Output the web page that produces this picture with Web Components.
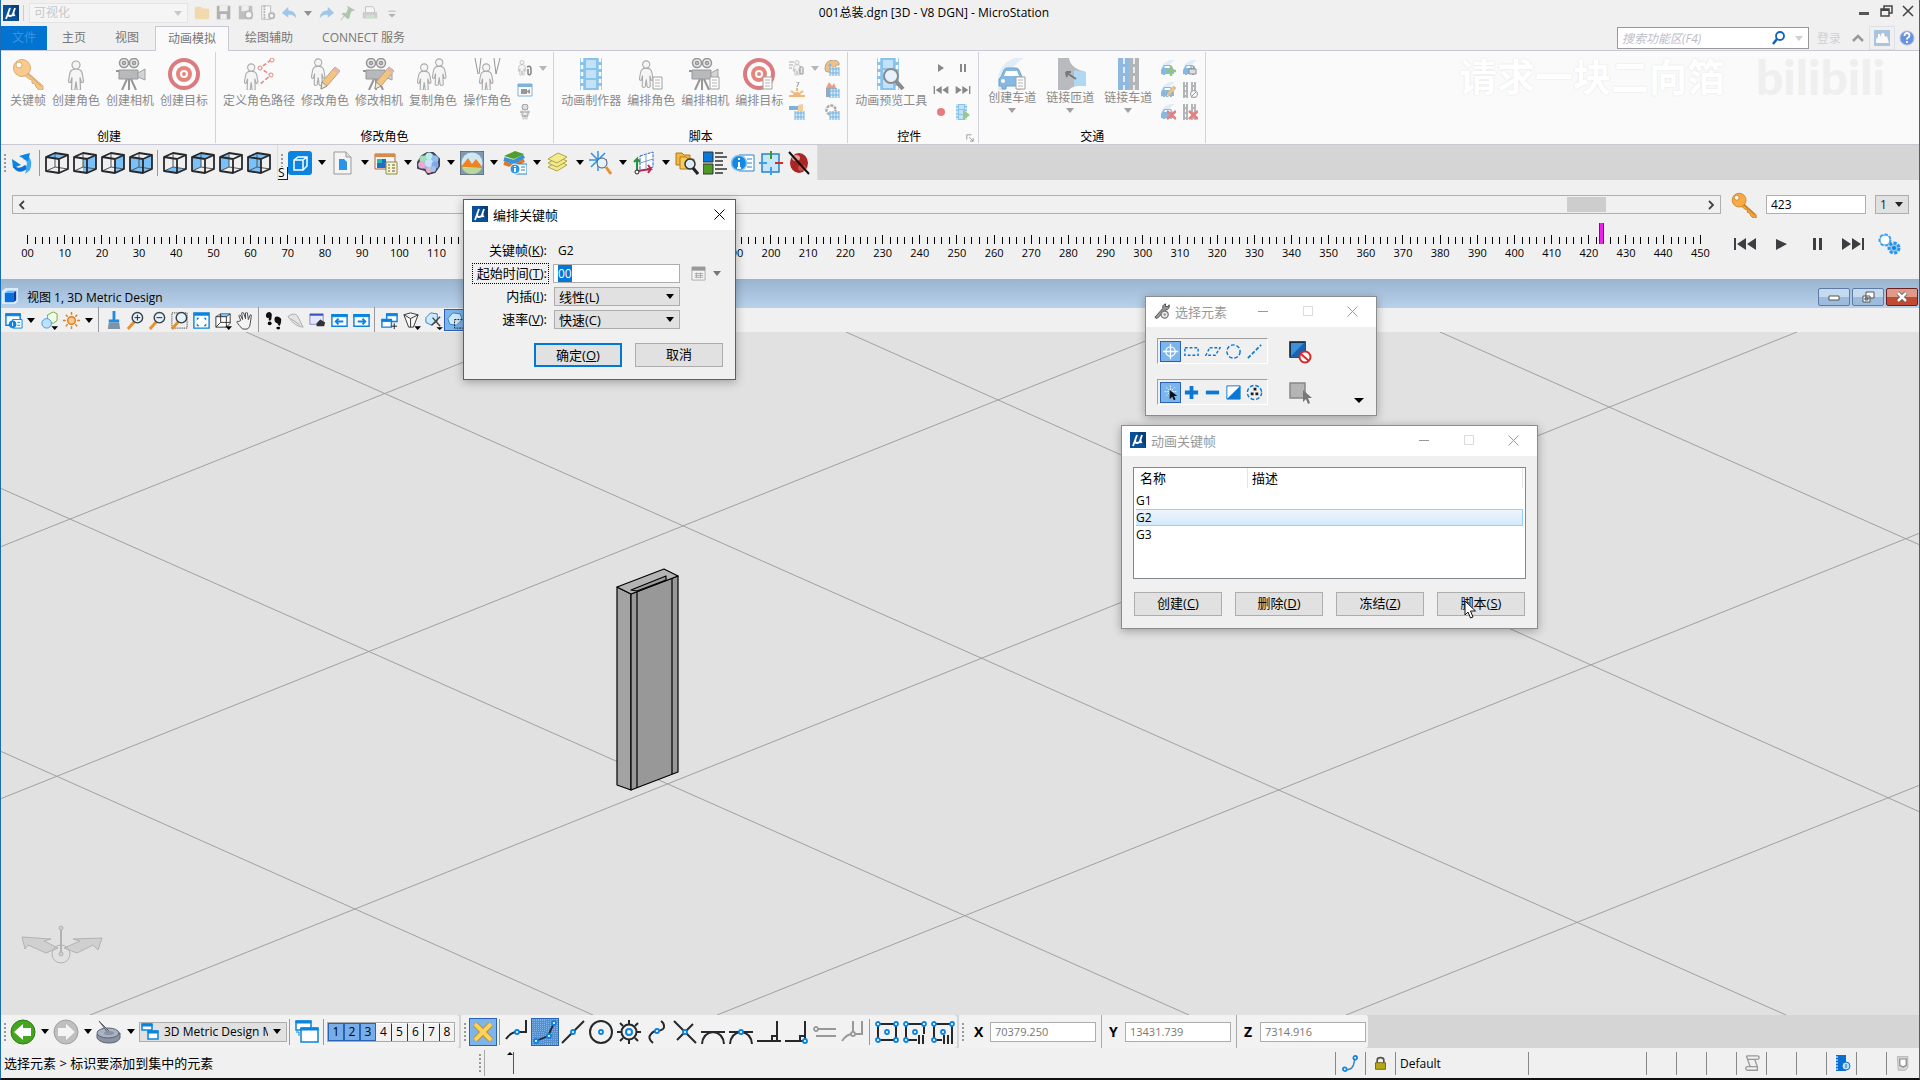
<!DOCTYPE html>
<html lang="zh-CN">
<head>
<meta charset="utf-8">
<title>001总装.dgn [3D - V8 DGN] - MicroStation</title>
<style>
body {
    margin: 0;
    background: #f0f0f0;
    font-family: "Open Sans", "Noto Sans CJK SC", sans-serif;
    font-size: 12px;
    color: #000;
}
</style>
</head>
<body>
<ms-app></ms-app>
<script>
// ---------- icons ----------
const person = (x, y, s = 1) => `<g transform="translate(${x} ${y}) scale(${s})" fill="#f2f2f2" stroke="#777" stroke-width="1.2"><path d="M4 10q4-2 8 0q2 1 2.500 5l1 6q0 2-2 1.500l-1.500-5l.5 12q-2.500 2-3.500 0l-1-8l-1 8q-1.500 2-3.500 0l.5-12l-1.500 5q-2 .5-2-1.500l1-6q.5-4 2.500-5z"/><circle cx="8" cy="5" r="4"/></g>`;
const pencil = (x, y, s = 1) => `<g transform="translate(${x} ${y}) scale(${s})"><path d="M15 0l5 4l-13 15l-6 3l1-7z" fill="#f0a030" stroke="#8a6a3a"/><path d="M15 0l5 4l-2 3l-5-4z" fill="#d78c7c"/><path d="M2 15l5 4l-6 3z" fill="#f2dcb8" stroke="#555"/></g>`;
const movie = `<g fill="#ddd" stroke="#555" stroke-width="1.500"><circle cx="8" cy="5" r="4.500"/><circle cx="18" cy="5" r="4.500"/><circle cx="8" cy="5" r="1.500"/><circle cx="18" cy="5" r="1.500"/></g><path d="M3 12h19v9h-19z" fill="#8c8f94" stroke="#555"/><path d="M22 15l7-4v11l-7-3z" fill="#bbb" stroke="#666"/><path d="M0 13h3M11 21l-5 11M15 21l5 11M13 21v11" stroke="#555" stroke-width="2"/>`;
const bull = `<circle cx="16" cy="16" r="14" fill="#fff" stroke="#c8282d" stroke-width="4"/><circle cx="16" cy="16" r="8" fill="#d8382c"/><circle cx="16" cy="16" r="4" fill="#fff"/><circle cx="16" cy="16" r="2" fill="#d8382c"/>`;
const sheet = (x, y) => `<g transform="translate(${x} ${y})"><path d="M0 0h9v12h-9z" fill="#fff" stroke="#666"/><path d="M2 3h5M2 6h5M2 9h5" stroke="#888"/></g>`;
const strip = (x, y, s = 1) => `<g transform="translate(${x} ${y}) scale(${s})"><path d="M0 0h22v32h-22z" fill="#3c9fe0"/><path d="M6 2h10v8h-10zM6 12h10v8h-10zM6 22h10v8h-10z" fill="#9fd3f5"/><path d="M2 0v32M20 0v32" stroke="#fff" stroke-width="2.500" stroke-dasharray="4 3"/></g>`;
const grid = (x, y) => `<g transform="translate(${x} ${y})"><path d="M0 0h9v9h-9z" fill="#bfe2fb"/><path d="M0 0v9M3 0v9M6 0v9M9 0v9M0 2h9M0 6h9" stroke="#1f83cf" fill="none"/></g>`;
const car = `<path d="M2 20q2-14 16-20h10q-16 8-18 32h-8z" fill="#cfe3f5"/><path d="M3 21l2-2l3-7q1-2 3-2h9q2 0 3 2l3 7l2 2v7h-3v3h-4v-3h-11v3h-4v-3h-3z" fill="#3a8fd2" stroke="#1f66a5"/><path d="M8 18l2-5h11l2 5z" fill="#fff"/><circle cx="7" cy="23" r="2" fill="#fff"/><circle cx="23" cy="23" r="2" fill="#fff"/>`;
const smallCar = `<path d="M1 10q1-8 9-10h5q-8 4-9 15h-5z" fill="#cfe3f5"/><path d="M1 10l3-5h7l3 5v4h-2v1h-2v-1h-5v1h-2v-1h-2z" fill="#3a8fd2"/><path d="M4 8l1-2h5l1 2z" fill="#fff"/>`;
const roads = `<path d="M1 0h5v16h-5zM9 0h5v16h-5z" fill="#85898e"/><path d="M3.500 0v16M11.500 0v16" stroke="#fff" stroke-dasharray="3 2"/>`;
const node = (x, y, c = "#0a84e0") => `<circle cx="${x}" cy="${y}" r="2" fill="#fff" stroke="${c}" stroke-width="1.800"/>`;
const cubeFaces = {
    top: "1,6 10,2 23,4 14,8", right: "14,8 23,4 23,18 14,22", front: "1,6 14,8 14,22 1,20",
    left: "1,6 10,2 10,16 1,20", back: "10,7 23,5 23,19 14,22 10,21", bottom: "1,20 10,16 23,18 14,22"
};
const cube = (...faces) => faces.map(f => `<polygon points="${cubeFaces[f]}" fill="#79c1fa"/>`).join("") +
    `<path d="M10 2v14l-9 4M10 16l13 2" fill="none" stroke="#555"/><path d="M1 6l9-4l13 2v14l-9 4l-13-2zM1 6l13 2l9-4M14 8v14" fill="none" stroke="#26282c" stroke-width="1.800" stroke-linejoin="round"/>`;
const lens = (extra = "") => `<path d="M9 11l-7 8" stroke="#e8912a" stroke-width="3"/><circle cx="12" cy="7" r="5.500" fill="#e3f2fc" stroke="#3c4148" stroke-width="1.500"/>${extra}`;
const pane = (x, y, w, h) => `<path d="M${x} ${y}h${w}v${h}h-${w}z" fill="#fff" stroke="#0a84e0" stroke-width="1.500"/><path d="M${x} ${y}h${w}v2h-${w}z" fill="#0a84e0" stroke="#0a84e0"/>`;
const fence = extra => `<path d="M3 4h18v16h-18z" fill="none" stroke="#26282c" stroke-width="2"/>${node(3, 4)}${node(21, 4)}${node(3, 20)}${extra ? "" : node(21, 20)}${node(12, 12)}${extra}`;
const sheets = (c, s) => [14, 10, 6].map(y => `<path d="M2 ${y}l9 4l10-6l-9-4z" fill="${c}" stroke="${s}"/>`).join("");

// name: [box size, markup]
const ICONS = {
    logo: [16, `<rect width="16" height="16" fill="#0b4f96"/><path d="M8 0h8v16z" fill="#0a3e78"/><path d="M7 3l-4 11M5.500 8q-1 3 1.500 3q2.500 0 4-3M12 3l-2 6q0 2 2 1" fill="none" stroke="#fff" stroke-width="1.800"/>`],
    key: [32, `<path d="M14 13l17 15v4h-4l-3-3l-1-3l-3-1v-3l-3-1l-6-5z" fill="#f5a33a" stroke="#c77a1a"/><path d="M14 14l15 14" stroke="#a8671a"/><circle cx="10" cy="10" r="8.500" fill="#f8ab45" stroke="#c77a1a"/><circle cx="7" cy="7" r="3" fill="#fff" stroke="#c77a1a"/>`],
    person: [32, person(8, 2)],
    movie: [32, `<g transform="translate(2 0)">${movie}</g>`],
    target: [32, bull],
    path: [32, person(1, 5, .9) + `<path d="M28 2l-11 8l11 7l-12 10" fill="none" stroke="#d8382c" stroke-width="1.500" stroke-dasharray="4 2"/><g fill="#fff" stroke="#d8382c"><circle cx="29" cy="2" r="2"/><circle cx="17" cy="10" r="2"/><circle cx="28" cy="17" r="2"/></g>`],
    personEdit: [32, person(2, 0, .9) + pencil(11, 9)],
    movieEdit: [32, movie + pencil(11, 9)],
    copy: [32, person(0, 5, .9) + person(15, 0, .9)],
    puppet: [32, person(8, 5, .9) + `<path d="M4 0l3 16M10 0l-2 16M23 0l2 16M29 0l-4 16" stroke="#555" fill="none"/>`],
    attach: [16, person(1, 0, .5) + `<path d="M10 7q4-2 4 2v4q-1 3-3 1v-5" fill="none" stroke="#333" stroke-width="1.500"/>`],
    camWin: [16, `<path d="M1 2h14v12h-14z" fill="#fff" stroke="#2a83c8"/><path d="M1 2h14v3h-14z" fill="#2a83c8"/><path d="M4 7h6v5h-6zM10 9l3-2v5l-3-2z" fill="#555"/>`],
    robot: [16, person(4, 0, .5) + `<path d="M3 8h10M5 12h6" stroke="#555"/><circle cx="8" cy="3" r="3" fill="#ccc" stroke="#666"/>`],
    film: [32, strip(5, 0)],
    personList: [32, person(4, 2, .9) + sheet(18, 19)],
    movieList: [32, movie + sheet(21, 19)],
    targetList: [32, bull + sheet(20, 19)],
    speed: [16, `<path d="M0 2h5M0 5h4M0 8h3" stroke="#777"/>` + person(4, 0, .5) + `<path d="M11 7q4-1 3 3v4h-3z" fill="#ddd" stroke="#555"/>`],
    sun: [16, `<path d="M4 14a4 4 0 0 1 8 0z" fill="#f08a24"/><path d="M8 6v3M2 9l3 2M14 9l-3 2M0 14h16" stroke="#f08a24" stroke-width="2"/><path d="M7 0h3l-2 5" fill="none" stroke="#555"/>`],
    torch: [16, `<path d="M0 2h9v4h-9z" fill="#2a83c8"/><path d="M9 1l5-1v8l-5-1z" fill="#f0b060"/>` + grid(6, 7)],
    palette: [16, `<path d="M1 9q0-9 9-9q6 1 5 5q-3-1-4 2q-2 6-7 5q-3 0-3-3z" fill="#e89a3c" stroke="#8a6a3a"/><circle cx="6" cy="5" r="1.500" fill="#3a8fd2"/>` + grid(6, 7)],
    fire: [16, `<path d="M2 6l3-6l3 4l2-3l2 5z" fill="#e8602c"/><path d="M2 6h11v9h-11z" fill="#56759a"/>` + grid(6, 7)],
    cog: [16, `<circle cx="7" cy="6" r="4.500" fill="#fff" stroke="#777" stroke-width="2.500" stroke-dasharray="3 1"/>` + grid(6, 7)],
    preview: [32, strip(2, 0) + `<path d="M20 22l8 9" stroke="#444" stroke-width="4"/><circle cx="16" cy="18" r="7" fill="#d9edfb" stroke="#444" stroke-width="2"/>`],
    play: [16, `<path d="M2 0l12 8l-12 8z" fill="#3d3d42"/>`],
    pause: [16, `<path d="M2 0h4v16h-4zM10 0h4v16h-4z" fill="#3d3d42"/>`],
    playBig: [24, `<path d="M7 7l11 5l-11 6z" fill="#3d3d42"/>`],
    pauseBig: [24, `<path d="M8 6h3v12h-3zM14 6h3v12h-3z" fill="#3d3d42"/>`],
    prev: [24, `<path d="M1 6h2v12h-2zM13 6v12l-9-6zM23 6v12l-9-6z" fill="#3d3d42"/>`],
    next: [24, `<path d="M21 6h2v12h-2zM1 6l9 6l-9 6zM11 6l9 6l-9 6z" fill="#3d3d42"/>`],
    record: [16, `<circle cx="8" cy="8" r="4" fill="#e02828"/>`],
    filmPlay: [16, strip(1, 0, .5) + `<path d="M8 6l7 5l-7 5z" fill="#5ca83c"/>`],
    car: [32, car + sheet(20, 19)],
    ramp: [32, `<path d="M4 0h11q1 10 17 14v14q-12-2-17 4h-11z" fill="#8d9095"/><path d="M20 12l12 2v14q-8-1-12 0z" fill="#7fc0ee"/><path d="M22 21l-9-6M12 14l5 0M12 14l1 5" stroke="#222" stroke-width="2"/>`],
    road: [32, `<path d="M6 0h11v32h-11z" fill="#4a8fd0"/><path d="M17 0h10v32h-10z" fill="#85898e"/><path d="M12 0v32M22 0v32" stroke="#fff" stroke-width="1.500" stroke-dasharray="6 3"/>`],
    carAdd: [16, smallCar + `<path d="M11 6v10M6 11h10" stroke="#4ea02e" stroke-width="2.500"/>`],
    carLink: [16, smallCar + `<path d="M7 9h7v5h-7zM9 9v-3M12 9v-3" fill="#ccc" stroke="#444"/>`],
    carEdit: [16, smallCar + pencil(6, 4, .5)],
    roadOff: [16, roads + `<circle cx="12" cy="12" r="3.500" fill="#fff" stroke="#555"/><path d="M10 14l4-4" stroke="#555"/>`],
    carDel: [16, smallCar + `<path d="M7 7l9 8M16 7l-9 8" stroke="#dc3028" stroke-width="2.500"/>`],
    roadDel: [16, roads + `<path d="M7 7l9 8M16 7l-9 8" stroke="#dc3028" stroke-width="2.500"/>`],
    folder: [20, `<path d="M2 5q0-2 2-2h5l2 2h5q2 0 2 2v8q0 2-2 2h-12q-2 0-2-2z" fill="#f0b84a"/>`],
    save: [20, `<path d="M2 2h15v15h-15z" fill="#555"/><path d="M5 2h9v6h-9zM6 11h7v6h-7z" fill="#eee"/>`],
    saveCog: [20, `<path d="M2 2h15v15h-15z" fill="#777"/><path d="M5 2h8v6h-8z" fill="#eee"/><circle cx="13" cy="12" r="4" fill="#fff" stroke="#666" stroke-width="2"/>`],
    zip: [20, `<path d="M3 2h10v15h-10z" fill="#fff" stroke="#666"/><path d="M6 2v14" stroke="#555" stroke-width="2" stroke-dasharray="2 1"/><circle cx="14" cy="13" r="3" fill="#fff" stroke="#666" stroke-width="2"/>`],
    undo: [20, `<path d="M8 3l-7 7l7 5v-3q6-1 9 4q0-8-9-9z" fill="#2b8be0"/>`],
    redo: [20, `<path d="M12 3l7 7l-7 5v-3q-6-1-9 4q0-8 9-9z" fill="#2b8be0"/>`],
    pin: [20, `<path d="M9 2l9 5l-4 1l-2 5q0 3-2 4l-7-6q1-2 5-1l2-5z" fill="#4a8a4a"/><path d="M6 13l-4 5" stroke="#666"/>`],
    print: [20, `<path d="M5 3h8l2 3v4h-10z" fill="#fff" stroke="#777"/><path d="M2 9h16v7h-16z" fill="#999"/><path d="M5 12h10v4h-10z" fill="#9c9"/>`],
    more: [20, `<path d="M6 8h8" stroke="#555"/><path d="M6 11h8l-4 4z" fill="#555"/>`],
    search: [16, `<circle cx="9" cy="6" r="4" fill="none" stroke="#1060c0" stroke-width="1.800"/><path d="M6 9l-4 5" stroke="#1060c0" stroke-width="2.500"/>`],
    users: [16, `<path d="M0 0h16v16h-16z" fill="#7aa8d2"/><path d="M2 13v-4l2-2v-3h2v3l2-4h2l1 4l2-1l2 7z" fill="#fff"/>`],
    help: [16, `<circle cx="8" cy="8" r="7" fill="#4a7ad8" stroke="#9ab4e8"/><path d="M5.500 6q0-3 2.500-3t2.500 2.500q0 1.500-2.500 3v1M8 11v2" fill="none" stroke="#fff" stroke-width="1.800"/>`],
    winMin: [16, `<path d="M3 9h10v3h-10z" fill="#555"/>`],
    winMax: [16, `<path d="M6 6v-3h8v7h-3M3 6h8v7h-8z" fill="none" stroke="#444" stroke-width="1.500"/><path d="M3 6h8v2h-8z" fill="#444"/>`],
    winClose: [16, `<path d="M3 3l10 10M13 3l-10 10" stroke="#444" stroke-width="1.500"/>`],
    up: [16, `<path d="M3 11l5-5l5 5" fill="none" stroke="#999" stroke-width="2.500"/>`],
    left: [10, `<path d="M7 1l-4 4l4 4" fill="none" stroke="#444" stroke-width="1.800"/>`],
    right: [10, `<path d="M3 1l4 4l-4 4" fill="none" stroke="#444" stroke-width="1.800"/>`],
    launcher: [10, `<path d="M1 7v-6h6M4 4l5 5M9 5v4h-4" fill="none" stroke="#888"/>`],
    refresh: [24, `<path d="M2 13q5 7 12 1l3 3q-9 8-15-1z" fill="#0a72d8"/><path d="M1 8l1 9l8-3z" fill="#0a84e0"/><path d="M14 3q9 4 5 16l-5 4q2-4 1-7q3-6-3-8z" fill="#41a8f5"/><path d="M8 5l11-3l-2 8z" fill="#0f84e6"/>`],
    c1: [24, cube("top")], c2: [24, cube("back")], c3: [24, cube("right")], c4: [24, cube("front", "right")],
    c5: [24, cube("bottom")], c6: [24, cube("top", "left")], c7: [24, cube("left")], c8: [24, cube("front", "top")],
    viewCube: [24, `<rect width="24" height="24" rx="3" fill="#0a84e0"/><path d="M6 9l4-3h9v9l-4 4h-9zM6 9h9v10M15 9l4-3" fill="none" stroke="#fff" stroke-width="1.500"/>`],
    doc: [24, `<path d="M3 1h12l5 5v17h-17z" fill="#f4f4f4" stroke="#999"/><path d="M15 1v5h5" fill="#ddd" stroke="#999"/><path d="M8 8h5l3 3v8h-8z" fill="#2b94e8"/>`],
    render: [24, `<path d="M1 3h20v15h-20z" fill="#f5f5f5" stroke="#b9653b"/><path d="M1 3h20v3h-20z" fill="#d78a4c"/><path d="M3 8h9v9h-9z" fill="#1c70c8"/><path d="M3 8h5v4h-5z" fill="#1fc2a0"/><path d="M12 11h11v12h-11z" fill="#fbf6c8" stroke="#8a8a50"/><path d="M14 14h2M14 17h2M14 20h2M18 14h3M18 17h3M18 20h3" stroke="#555"/>`],
    molecule: [24, `<path d="M5 5l5-3h6l6 6v7l-4 6l-7 2l-3-4l-7-2l-1-4z" fill="#8fb4e0" stroke="#445" stroke-width="2" stroke-linejoin="round"/><circle cx="6" cy="8" r="3.500" fill="#9fe0b8"/><circle cx="12" cy="5" r="3.500" fill="#b8ece6"/><circle cx="18" cy="8" r="3.500" fill="#8fc0f4"/><circle cx="5" cy="14" r="3.500" fill="#f0a8d0"/><circle cx="12" cy="12" r="4" fill="#c8e2fa"/><circle cx="18" cy="14" r="3.500" fill="#7fa8ea"/><circle cx="12" cy="19" r="3" fill="#f0b0b8"/><circle cx="16" cy="18" r="3" fill="#a8c0f0"/>`],
    sky: [24, `<path d="M0 0h24v24h-24z" fill="#7f9bb4" stroke="#555"/><circle cx="12" cy="12" r="10.500" fill="#cfe6f5"/><path d="M1 16l7-9l4 6l4-5l7 9z" fill="#ef8322"/><path d="M2 17h20q-3 6-10 6t-10-6z" fill="#b9d99a"/>`],
    layersInfo: [24, `<path d="M1 12l10 3l10-6" fill="none" stroke="#e0782c" stroke-width="4"/><path d="M1 8l10 3l10-6" fill="none" stroke="#3a92d8" stroke-width="4"/><path d="M1 5l10 3l10-5l-9-3z" fill="#4ea02e"/><path d="M12 13h12v10h-12z" fill="#fff" stroke="#2a83c8"/><circle cx="12" cy="18" r="5" fill="#2b94e8" stroke="#fff"/><path d="M12 15v1M12 17v4" stroke="#fff" stroke-width="2"/><path d="M18 16h4M18 19h4" stroke="#2a83c8"/>`],
    layers: [24, `<g transform="translate(0 2)">${sheets("#f2ea8c", "#b0a44a")}</g>`],
    sparkle: [24, `<path d="M9 0v20M0 9h18M2 2l14 14M16 2l-14 14" stroke="#2b94e8" stroke-width="1.500"/><circle cx="13" cy="12" r="5" fill="#e3f2fc" stroke="#556"/><path d="M17 16l5 7" stroke="#e8912a" stroke-width="3"/>`],
    axes: [24, `<path d="M8 5l13-4v15l-13 4z" fill="#fff" stroke="#2b60c8" stroke-dasharray="3 1"/><path d="M14 3v14M8 12l13-4" stroke="#7a9ad8"/><path d="M5 20v-12l-3 3M5 8l3 3" stroke="#23923a" stroke-width="2" fill="none"/><path d="M5 20l14-2l-3-4M19 18l-3 4" stroke="#b8284a" stroke-width="2" fill="none"/><circle cx="5" cy="21" r="2" fill="#fff" stroke="#222"/>`],
    folderFind: [24, `<path d="M1 2h6l2 2h6v10h-14z" fill="#f2b640" stroke="#b27c18"/><path d="M5 6h6l2 2h6v10h-14z" fill="#f8ca62" stroke="#b27c18"/><circle cx="15" cy="13" r="5" fill="#d9edfb" stroke="#333" stroke-width="1.500"/><path d="M18 17l5 6" stroke="#222" stroke-width="3"/>`],
    list: [24, `<path d="M0 1h10v10h-10z" fill="#0a78d8" stroke="#333"/><path d="M0 13h10v10h-10z" fill="#4e9a26" stroke="#333"/><path d="M12 2h8M12 6h12M12 10h8M12 14h8M12 18h12M12 22h8" stroke="#333" stroke-width="1.500"/>`],
    info: [24, `<path d="M8 4h15v16h-15z" fill="#fff" stroke="#2a83c8"/><path d="M16 8h5M16 12h5M16 16h5" stroke="#2a83c8"/><circle cx="8" cy="12" r="7.500" fill="#1486e4" stroke="#7cc0f5" stroke-width="1.500"/><path d="M8 7v2M8 11v6M6 17h4" stroke="#fff" stroke-width="2"/>`],
    target2: [24, `<path d="M3 3h17v18h-17z" fill="#c8e6fb" stroke="#2a83c8" stroke-width="1.500"/><path d="M12 0v8" stroke="#3a9a2a" stroke-width="2"/><path d="M16 12h8" stroke="#d82828" stroke-width="2"/><path d="M0 12h8M12 16v8" stroke="#35a0f0" stroke-width="2"/>`],
    noSphere: [24, `<ellipse cx="12" cy="12" rx="9" ry="10" fill="#a82626"/><ellipse cx="9" cy="7" rx="4" ry="3" fill="#e8a09a"/><ellipse cx="15" cy="17" rx="4" ry="3" fill="#c85048"/><path d="M2 1l20 22" stroke="#111" stroke-width="2"/>`],
    gears: [24, `<circle cx="8" cy="8" r="5" fill="#fff" stroke="#3aa0ee" stroke-width="3" stroke-dasharray="3 1.500"/><circle cx="8" cy="8" r="5" fill="#fff" stroke="#3aa0ee"/><circle cx="17" cy="16" r="5" fill="#8cc8f6" stroke="#2b94e8" stroke-width="3" stroke-dasharray="3 1.500"/><circle cx="17" cy="16" r="2" fill="#0a84e0"/>`],
    viewIcon: [18, `<path d="M0 3l4-3h13v14l-3 3h-14z" fill="#dcecfb"/><path d="M3 5h9v10h-9z" fill="#0b6fe0"/><path d="M12 5l3-2v10l-3 2z" fill="#0a3ea0"/><path d="M3 5l3-2h9l-3 2z" fill="#52b8fa"/>`],
    vInfo: [20, pane(2, 3, 15, 12) + `<path d="M9 9h10v9h-10z" fill="#fff" stroke="#0a84e0"/><circle cx="9" cy="14" r="4" fill="#0a84e0"/><path d="M9 12v4" stroke="#fff"/><path d="M14 12h3M14 15h3" stroke="#0a84e0"/>`],
    vBall: [20, `<path d="M8 4l6-3l4 2v7l-4 3l-6-2z" fill="#f2fbe8" stroke="#6ab03a"/><circle cx="7" cy="13" r="5" fill="#bfe2fb" stroke="#3a9ae0"/><path d="M12 16h7l-3.500 4z"/>`],
    vSun: [20, `<circle cx="10" cy="10" r="4" fill="#f7c890" stroke="#e07c1c" stroke-width="1.500"/><path d="M10 1v3M10 16v3M1 10h3M16 10h3M4 4l2 2M14 14l2 2M16 4l-2 2M4 16l2-2" stroke="#e07c1c" stroke-width="1.500"/>`],
    brush: [20, `<path d="M9 0h3v9h4v3h-11v-3h4z" fill="#1f8be4"/><path d="M5 12h11l1 7h-13z" fill="#7e93a8"/>`],
    zoomIn: [20, lens(`<path d="M9 7h6M12 4v6" stroke="#222"/>`)],
    zoomOut: [20, lens(`<path d="M9 7h6" stroke="#222"/>`)],
    zoomWin: [20, `<path d="M2 2h16v16h-16z" fill="none" stroke="#222" stroke-dasharray="1 1"/>` + lens()],
    fit: [20, `<path d="M2 2h16v16h-16z" fill="#fff" stroke="#0a84e0" stroke-width="1.500"/><path d="M2 2h16v3h-16z" fill="#0a84e0"/><path d="M5 7h3l-3 3zM15 7v3l-3-3zM5 16v-3l3 3zM15 16h-3l3-3z" fill="#0a84e0"/>`],
    rotate: [20, `<path d="M2 6l5-3h10v10l-4 4h-11z" fill="#fff" stroke="#333"/><path d="M7 3h10l-4 3h-11z" fill="#79c1fa"/><path d="M2 6h11v11M13 6l4-3M7 3v9h10M7 12l-5 5" fill="none" stroke="#333"/><path d="M12 16h7l-3.500 4z"/>`],
    hand: [20, `<path d="M5 10l-2-5q1-2 2 0l2 4l-1-7q1-1 2 0l2 6v-6q1-1 2 0l1 7l2-5q2 0 1 2l-1 7q0 4-3 6h-5q-4-4-6-7q0-2 2-1z" fill="#f4f4f4" stroke="#444"/>`],
    feet: [20, `<path d="M2 5q0-4 4-4q3 1 2 5q0 3-1 4l-2 0l0-3q-3 1-3-2zM11 9q0-4 4-3q4 1 3 5q0 3-2 5l-2-3q-3-1-3-4z" fill="#111"/><ellipse cx="6" cy="13" rx="2" ry="2"/><ellipse cx="15" cy="18" rx="2" ry="1.500"/>`],
    fly: [20, `<path d="M2 6q6-5 10-1l6 12q-8 0-16-11z" fill="#e4e4e4" stroke="#aaa"/><path d="M5 8l10 7" stroke="#aaa"/>`],
    vCam: [20, `<path d="M2 3h14v11h-14z" fill="#e4e8ff" stroke="#8888c8"/><path d="M2 3h14v2h-14z" fill="#3a56c0"/><path d="M9 13l4-4l5 3l-1 4h-8z" fill="#333"/>`],
    vPrev: [20, pane(2, 4, 16, 12) + `<path d="M14 11h-8M9 8l-3 3l3 3" fill="none" stroke="#0a84e0" stroke-width="2"/>`],
    vNext: [20, pane(2, 4, 16, 12) + `<path d="M6 11h8M11 8l3 3l-3 3" fill="none" stroke="#0a84e0" stroke-width="2"/>`],
    vCopy: [20, pane(7, 3, 11, 8) + pane(2, 9, 10, 8) + `<path d="M15 13v6M12 16h6" stroke="#222"/>`],
    vView: [20, `<path d="M2 4l7-2l8 2l-5 13h-5zM2 4l7 4l8-4M9 8v9" fill="#f8f8f8" stroke="#333"/><path d="M13 16h7l-3.500 4z"/>`],
    vClip: [20, `<path d="M2 7l5-5l7 1v8l-6 4l-6-3z" fill="#cfe9fc" stroke="#2a83c8"/><path d="M8 15l9-9M9 7l8 9" stroke="#444" stroke-width="1.500"/><path d="M13 17h7l-3.500 3z"/>`],
    vClip2: [20, `<path d="M2 8l5-6l8 1l2 6l-6 6l-7-1z" fill="#cfe9fc" stroke="#2a83c8"/><path d="M9 9h11v9h-11z" fill="none" stroke="#222" stroke-dasharray="2 1"/>`],
    back: [26, `<circle cx="13" cy="13" r="12" fill="#45a51e" stroke="#2f7a12"/><path d="M4 13l9-8v4h8v8h-8v4z" fill="#fff"/>`],
    forward: [26, `<circle cx="13" cy="13" r="12" fill="#bfbfbf" stroke="#a0a0a0"/><path d="M22 13l-9-8v4h-8v8h8v4z" fill="#f4f4f4"/>`],
    disc: [26, `<path d="M1 15v4q3 5 12 5t11-5v-5z" fill="#8a93a3" stroke="#5a6272"/><ellipse cx="12" cy="14" rx="11" ry="5" fill="#aab3c2" stroke="#5a6272"/><path d="M3 2l9 12l2-1z" fill="#99a2b2" stroke="#5a6272"/><ellipse cx="13" cy="14" rx="5" ry="2" fill="#8a93a3"/>`],
    windows: [24, pane(1, 1, 15, 9) + pane(6, 8, 17, 14) + `<path d="M1 12h3v4" fill="none" stroke="#0a84e0"/>`],
    models: [18, pane(1, 1, 10, 6) + pane(7, 8, 10, 8)],
    cross: [28, `<path d="M6 6l16 16M22 6l-16 16" stroke="#c08a20" stroke-width="6"/><path d="M6 6l16 16M22 6l-16 16" stroke="#fcd25e" stroke-width="4"/>`],
    s1: [24, `<path d="M1 19q5-7 11-7h9v-13" fill="none" stroke="#26282c" stroke-width="2"/>` + node(12, 12)],
    s2: [28, `<path d="M2 2h24v24h-24z" fill="none" stroke="#2a62a8" stroke-width="24" stroke-dasharray="1 1" opacity=".45"/><path d="M5 23l12-5l6-13" fill="none" stroke="#26282c" stroke-width="1.800"/>` + node(5, 23) + node(18, 18) + node(23, 5)],
    s3: [24, `<path d="M1 23l22-22" stroke="#26282c" stroke-width="2"/>` + node(12, 12)],
    s4: [24, `<circle cx="12" cy="12" r="11" fill="none" stroke="#26282c" stroke-width="2"/>` + node(12, 12)],
    s5: [24, `<circle cx="12" cy="12" r="7.500" fill="none" stroke="#26282c" stroke-width="2"/><path d="M12 0v4M12 20v4M0 12h4M20 12h4M3 3l3 3M18 18l3 3M21 3l-3 3M3 21l3-3" stroke="#26282c" stroke-width="2"/><circle cx="12" cy="12" r="3" fill="#fff" stroke="#0a84e0" stroke-width="2"/>`],
    s6: [24, `<path d="M8 23q-6-5-2-9q2-3 6-3q8-1 7-5q0-3-3-5" fill="none" stroke="#26282c" stroke-width="2"/>` + node(12, 11)],
    s7: [24, `<path d="M1 1l22 22M20 4l-16 16" stroke="#26282c" stroke-width="2"/>` + node(12, 12)],
    s8: [24, `<path d="M0 12h24M1 24q1-11 11-12q10 1 11 12" fill="none" stroke="#26282c" stroke-width="2"/>`],
    s9: [24, `<path d="M0 12h24M1 24q1-11 11-12q10 1 11 12" fill="none" stroke="#26282c" stroke-width="2"/>` + node(12, 12)],
    s10: [24, `<path d="M0 21h24M20 21v-20M15 21v-5h5" fill="none" stroke="#26282c" stroke-width="2"/>`],
    s11: [24, `<path d="M0 21h20v-20M15 21v-5h5" fill="none" stroke="#26282c" stroke-width="2"/>` + node(20, 21)],
    s12: [24, `<path d="M3 9h20M3 16h20" stroke="#999" stroke-width="2"/>` + node(3, 9, "#999")],
    s13: [24, `<path d="M1 21q5-7 10-7h10v-13M12 1v13" fill="none" stroke="#999" stroke-width="2"/>` + node(12, 14, "#999")],
    f1: [24, fence("")],
    f2: [24, fence(`<path d="M14 14h10v10h-10z" fill="#f0f0f0"/><path d="M16 15v9M20 15v9" stroke="#26282c" stroke-width="2"/>`)],
    f3: [24, fence(`<path d="M11 15h13v9h-13z" fill="#f0f0f0"/><path d="M13 15v9M17 15v9M21 15v9" stroke="#26282c" stroke-width="2"/>`)],
    snap: [18, `<path d="M3 15q6 2 9-4l2-8" fill="none" stroke="#2a83c8" stroke-width="1.500"/>` + node(3, 15) + node(14, 3)],
    lock: [18, `<path d="M5 9v-4q0-3 4-3t4 3v4" fill="none" stroke="#555" stroke-width="2"/><path d="M3 8h12v8h-12z" fill="#b5a614" stroke="#665c0c"/>`],
    scroll: [20, `<path d="M5 2h11q2 0 2 2t-2 2h-3l3 8v4h-11q-2 0-2-2t2-2h3l-3-8v-1q-2-3 0-3zM5 6h9M8 14h8" fill="none" stroke="#999" stroke-width="1.500"/>`],
    book: [18, `<path d="M3 1h10v16h-10z" fill="#0a6fd0"/><path d="M2 3h3M2 6h3M2 9h3M2 12h3M2 15h3" stroke="#fff"/><circle cx="13" cy="12" r="4" fill="#bfe2fb" stroke="#0a6fd0"/><path d="M13 10v4" stroke="#0a6fd0"/>`],
    cup: [20, `<path d="M3 2h13v14l-3 3h-9z" fill="#d8d8d8" stroke="#aaa"/><path d="M6 5h8v8l-4 2l-4-2z" fill="#fff" stroke="#888" stroke-width="1.500"/>`],
    calc: [16, `<path d="M1 1h14v14h-14z" fill="#f5f5f5" stroke="#aaa"/><path d="M1 1h14v4h-14z" fill="#999"/><path d="M4 8h9M4 10h9M4 12h9M6 7v6M10 7v6" stroke="#aaa"/>`],
    tools: [18, `<path d="M1 16l9-10q-1-4 3-5v3h3l1-2q1 5-4 6l-9 9q-2 1-3-1z" fill="#999" stroke="#444"/><circle cx="12" cy="13" r="4" fill="#eee" stroke="#777" stroke-width="1.500"/><circle cx="12" cy="13" r="1.500" fill="#999"/>`],
    pick: [20, `<circle cx="10" cy="10" r="5.500" fill="none" stroke="#fff" stroke-width="1.500"/><path d="M10 1v18M1 10h18" stroke="#fff" stroke-width="1.500"/>`],
    block: [18, `<path d="M2 5h14v8h-14z" fill="none" stroke="#0a78d8" stroke-width="1.500" stroke-dasharray="3 2"/>`],
    shape: [18, `<path d="M6 5h11l-5 8h-10z" fill="none" stroke="#0a78d8" stroke-width="1.500" stroke-dasharray="3 2"/>`],
    circle: [18, `<circle cx="9" cy="9" r="7" fill="none" stroke="#0a78d8" stroke-width="1.500" stroke-dasharray="4 2"/>`],
    line: [18, `<path d="M2 16l14-14" stroke="#0a78d8" stroke-width="1.800" stroke-dasharray="4 2"/>`],
    select: [20, `<path d="M10 2v14M3 9h14M5 4l10 10M15 4l-10 10" stroke="#fff" stroke-dasharray="2 1"/><path d="M9 7v11l3-3l2 4l2-1l-2-4h4z" fill="#111"/>`],
    plus: [18, `<path d="M9 2v14M2 9h14" stroke="#0a78d8" stroke-width="4"/>`],
    minus: [18, `<path d="M2 9h14" stroke="#0a78d8" stroke-width="4"/>`],
    invert: [18, `<path d="M2 2h14v14h-14z" fill="#fff" stroke="#0a78d8"/><path d="M16 2v14h-14z" fill="#0a78d8"/>`],
    all: [18, `<circle cx="9" cy="9" r="7.500" fill="none" stroke="#0a78d8" stroke-width="1.500" stroke-dasharray="4 2"/><path d="M8 4h3v3h-3zM5 9h3v3h-3zM10 9h3v3h-3z" fill="#222"/>`],
    clear: [24, `<path d="M2 2h15v15h-15z" fill="#3c8fd8" stroke="#111" stroke-width="1.500"/><path d="M17 2v15h-15z" fill="#1a63b0"/><circle cx="17" cy="17" r="5.500" fill="#fff" stroke="#d82828" stroke-width="2"/><path d="M13 14l8 7" stroke="#d82828" stroke-width="2"/>`],
    grey: [24, `<path d="M2 2h15v15h-15z" fill="#b5b5b5" stroke="#888" stroke-width="1.500"/><path d="M15 9v12l3-3l2 5l2-1l-2-5h4z" fill="#777"/>`],
    cursor: [20, `<path d="M2 1v14l3-3l2.500 6l2.500-1l-2.500-6h5z" fill="#fff" stroke="#111"/>`]
};
const icon = (name, size) => {
    const [box, art] = ICONS[name];
    return `<svg width="${size || box}" height="${size || box}" viewBox="0 0 ${box} ${box}" fill="#000" aria-hidden="true">${art}</svg>`;
};
const BASE = `
    :host, * { box-sizing: border-box; }
    svg { display: block; flex: none; }
    button { font: inherit; color: inherit; padding: 0; margin: 0; border: 0; background: none; }
    .arrow { width: 0; height: 0; border: 4px solid transparent; border-top: 5px solid currentColor; border-bottom: 0; flex: none; }
`;

// ---------- toolbars ----------
// items: "name" is a button, "name+" has a menu arrow, "name*" is pressed, "|" is a divider
class ToolStrip extends HTMLElement {
    constructor() {
        super();
        this.attachShadow({ mode: "open" });
    }
    connectedCallback() {
        const size = this.getAttribute("size");
        const html = this.getAttribute("items").split(" ").map(item => {
            if (item === "|") return `<i class="sep"></i>`;
            if (item === "grip") return `<i class="grip"></i>`;
            const name = item.replace(/[+*]/, "");
            return `<button aria-label="${name}" class="${item.endsWith("*") ? "on" : ""}">${icon(name, size)}</button>` +
                (item.endsWith("+") ? `<span class="drop"><i class="arrow"></i></span>` : "");
        }).join("");
        this.shadowRoot.innerHTML = `
        <style>${BASE}
        :host { display: flex; align-items: center; }
        button { width: var(--cell, 28px); height: var(--cell, 28px); display: flex; align-items: center; justify-content: center; flex: none; overflow: hidden; }
        .on { background: #7db4ea; border: 1px solid #2a62b8; }
        .drop { width: var(--drop, 15px); display: flex; justify-content: center; }
        .sep { width: 6px; height: 26px; border-left: 1px solid #999; margin-left: 2px; margin-right: -2px; }
        .grip { width: 8px; height: 20px; background: radial-gradient(circle, #999 1px, transparent 1px) 0 0 / 8px 4px; }
        </style>${html}`;
    }
}
customElements.define("tool-strip", ToolStrip);

class ComboBox extends HTMLElement {
    constructor() {
        super();
        this.attachShadow({ mode: "open" });
    }
    connectedCallback() {
        this.shadowRoot.innerHTML = `
        <style>${BASE}
        :host { display: grid; align-items: center; }
        select { grid-area: 1 / 1; width: 100%; height: 100%; font: inherit; color: inherit; appearance: none; background: var(--combo-bg, #e1e1e1); border: 1px solid var(--combo-border, #adadad); border-radius: 0; padding: 0 18px 0 var(--combo-pad, 4px); line-height: 16px; }
        .arrow { grid-area: 1 / 1; justify-self: end; margin-right: 6px; border-width: 5px 4px 0; pointer-events: none; }
        ::slotted(*) { grid-area: 1 / 1; z-index: 1; pointer-events: none; }
        </style>
        <select aria-label="${this.getAttribute("name")}"><option>${this.getAttribute("value")}</option></select>
        <i class="arrow"></i><slot></slot>`;
    }
}
customElements.define("combo-box", ComboBox);

class MsIcon extends HTMLElement {
    constructor() {
        super();
        this.attachShadow({ mode: "open" });
    }
    connectedCallback() {
        this.shadowRoot.innerHTML = `<style>:host { display: block; flex: none; } svg { display: block; }</style>${icon(this.getAttribute("name"), this.getAttribute("size"))}`;
    }
}
customElements.define("ms-icon", MsIcon);

// ---------- title bar and ribbon ----------
class TitleBar extends HTMLElement {
    constructor() {
        super();
        this.attachShadow({ mode: "open" });
        this.shadowRoot.innerHTML = `
        <style>${BASE}
        :host { display: grid; grid-template-columns: 1fr auto 1fr; align-items: center; height: 26px; background: #f0f0f0; }
        .left { display: flex; align-items: center; padding-left: 2px; }
        .sep { width: 1px; height: 16px; background: #ccc; margin: 0 5px 0 4px; }
        combo-box { width: 159px; height: 20px; margin-right: 3px; color: #c8c8c8; --combo-bg: #f5f5f5; --combo-border: #e4e4e4; }
        tool-strip { --cell: 22px; --drop: 14px; opacity: .4; }
        .right { justify-self: end; }
        .right tool-strip { opacity: 1; margin-bottom: 4px; }
        h1 { margin: 0 52px 2px 0; font-size: 12px; font-weight: 400; }
        </style>
        <div class="left"><ms-icon name="logo"></ms-icon><i class="sep"></i>
            <combo-box name="工作流" value="可视化"></combo-box>
            <tool-strip size="18" items="folder save saveCog zip undo+ redo pin print more"></tool-strip></div>
        <h1>001总装.dgn [3D - V8 DGN] - MicroStation</h1>
        <div class="right"><tool-strip size="16" items="winMin winMax winClose"></tool-strip></div>`;
    }
}
customElements.define("title-bar", TitleBar);

class RibbonTabs extends HTMLElement {
    constructor() {
        super();
        this.attachShadow({ mode: "open" });
        this.shadowRoot.innerHTML = `
        <style>${BASE}
        :host { display: flex; height: 25px; background: #f0f0f0; border-bottom: 1px solid #c9c9d6; color: #777; }
        nav { display: flex; gap: 1px; }
        a { color: inherit; text-decoration: none; padding: 0 14px; line-height: 23px; height: 24px; }
        .file { background: #0173d0; color: #3a94e4; padding: 0 11px; }
        .on { background: #fafafb; border: 1px solid #c9c9d6; border-bottom: 0; padding: 0 12px; height: 25px; color: #777; margin: 0 1px; }
        .right { margin-left: auto; display: flex; align-items: center; color: #d0d0d6; }
        label { display: flex; align-items: center; width: 192px; height: 22px; background: #fff; border: 1px solid #999; padding: 0 5px 0 4px; gap: 8px; }
        input { flex: 1; min-width: 0; border: 0; padding: 0; font: italic 12px "Open Sans", "Noto Sans CJK SC", sans-serif; background: none; outline: 0; }
        input::placeholder { color: #bdbdca; }
        .login { width: 40px; text-align: center; }
        .up { width: 16px; margin: 0 3px 0 1px; }
        .user { border: 1px solid #d4d4e4; padding: 3px 4px; width: 26px; opacity: .6; margin-right: 2px; }
        .help { width: 20px; display: flex; justify-content: center; opacity: .8; margin-right: 2px; }
        </style>
        <nav><a class="file" href="#">文件</a><a href="#">主页</a><a href="#">视图</a><a class="on" href="#">动画模拟</a><a href="#">绘图辅助</a><a href="#">CONNECT 服务</a></nav>
        <div class="right">
            <label><input placeholder="搜索功能区(F4)" aria-label="搜索功能区">${icon("search", 16)}<i class="arrow"></i></label>
            <button class="login">登录</button>
            <button class="up" aria-label="折叠">${icon("up", 16)}</button>
            <button class="user" aria-label="用户">${icon("users", 16)}</button>
            <button class="help" aria-label="帮助">${icon("help", 16)}</button>
        </div>`;
    }
}
customElements.define("ribbon-tabs", RibbonTabs);

class RibbonGroup extends HTMLElement {
    constructor() {
        super();
        this.attachShadow({ mode: "open" });
    }
    connectedCallback() {
        this.shadowRoot.innerHTML = `
        <style>${BASE}
        :host { display: flex; flex-direction: column; border-right: 1px solid #d3d3de; padding: 0 4px; margin: 1px 0; }
        .tools { flex: 1; display: flex; padding-top: 5px; }
        footer { display: flex; height: 15px; line-height: 17px; }
        b { font-weight: 400; flex: 1; text-align: center; }
        .launch { padding-top: 4px; }
        </style>
        <div class="tools"><slot></slot></div>
        <footer><b>${this.getAttribute("text")}</b>${this.hasAttribute("launcher") ? `<button class="launch" aria-label="设置">${icon("launcher", 8)}</button>` : ""}</footer>`;
    }
}
customElements.define("ribbon-group", RibbonGroup);

class RibbonButton extends HTMLElement {
    constructor() {
        super();
        this.attachShadow({ mode: "open" });
    }
    connectedCallback() {
        const menu = this.hasAttribute("menu");
        this.shadowRoot.innerHTML = `
        <style>${BASE}
        :host { display: block; color: #8a8a8a; }
        button { display: flex; flex-direction: column; align-items: center; padding: 1px ${menu ? 5 : 3}px 0; }
        svg { opacity: .6; }
        span { line-height: 16px; margin-top: ${menu ? 0 : 3}px; }
        .arrow { margin-top: 2px; opacity: .8; }
        </style>
        <button>${icon(this.getAttribute("icon"), 32)}<span>${this.getAttribute("text")}</span>${menu ? `<i class="arrow"></i>` : ""}</button>`;
    }
}
customElements.define("ribbon-button", RibbonButton);

class RibbonBar extends HTMLElement {
    constructor() {
        super();
        this.attachShadow({ mode: "open" });
        this.shadowRoot.innerHTML = `
        <style>${BASE}
        :host { display: flex; height: 94px; background: #fafafb; border-bottom: 1px solid #c9c9d6; padding-left: 2px; position: relative; }
        .small { display: flex; flex-direction: column; color: #888; }
        .small tool-strip { --cell: 22px; --drop: 13px; opacity: .6; }
        .mark { position: absolute; right: 194px; top: -2px; font-size: 38px; line-height: 54px; font-weight: 700; color: #fff; text-shadow: 0 0 2px #dedede; }
        .brand { position: absolute; right: 34px; top: -4px; font: 900 48px/60px Lato, sans-serif; color: #efefef; }
        </style>
        <ribbon-group text="创建">
            <ribbon-button icon="key" text="关键帧"></ribbon-button><ribbon-button icon="person" text="创建角色"></ribbon-button>
            <ribbon-button icon="movie" text="创建相机"></ribbon-button><ribbon-button icon="target" text="创建目标"></ribbon-button>
        </ribbon-group>
        <ribbon-group text="修改角色">
            <ribbon-button icon="path" text="定义角色路径"></ribbon-button><ribbon-button icon="personEdit" text="修改角色"></ribbon-button>
            <ribbon-button icon="movieEdit" text="修改相机"></ribbon-button><ribbon-button icon="copy" text="复制角色"></ribbon-button>
            <ribbon-button icon="puppet" text="操作角色"></ribbon-button>
            <div class="small"><tool-strip size="16" items="attach+"></tool-strip><tool-strip size="16" items="camWin"></tool-strip><tool-strip size="16" items="robot"></tool-strip></div>
        </ribbon-group>
        <ribbon-group text="脚本">
            <ribbon-button icon="film" text="动画制作器"></ribbon-button><ribbon-button icon="personList" text="编排角色"></ribbon-button>
            <ribbon-button icon="movieList" text="编排相机"></ribbon-button><ribbon-button icon="targetList" text="编排目标"></ribbon-button>
            <div class="small"><tool-strip size="16" items="speed+"></tool-strip><tool-strip size="16" items="sun"></tool-strip><tool-strip size="16" items="torch"></tool-strip></div>
            <div class="small"><tool-strip size="16" items="palette"></tool-strip><tool-strip size="16" items="fire"></tool-strip><tool-strip size="16" items="cog"></tool-strip></div>
        </ribbon-group>
        <ribbon-group text="控件" launcher>
            <ribbon-button icon="preview" text="动画预览工具"></ribbon-button>
            <div class="small"><tool-strip size="8" items="play"></tool-strip><tool-strip size="16" items="prev"></tool-strip><tool-strip size="16" items="record"></tool-strip></div>
            <div class="small"><tool-strip size="8" items="pause"></tool-strip><tool-strip size="16" items="next"></tool-strip><tool-strip size="16" items="filmPlay"></tool-strip></div>
        </ribbon-group>
        <ribbon-group text="交通">
            <ribbon-button menu icon="car" text="创建车道"></ribbon-button><ribbon-button menu icon="ramp" text="链接匝道"></ribbon-button><ribbon-button menu icon="road" text="链接车道"></ribbon-button>
            <div class="small"><tool-strip size="16" items="carAdd carLink"></tool-strip><tool-strip size="16" items="carEdit roadOff"></tool-strip><tool-strip size="16" items="carDel roadDel"></tool-strip></div>
        </ribbon-group>
        <span class="mark">请求一块二向箔</span><span class="brand">bilibili</span>`;
    }
}
customElements.define("ribbon-bar", RibbonBar);

class MainTools extends HTMLElement {
    constructor() {
        super();
        this.attachShadow({ mode: "open" });
        this.shadowRoot.innerHTML = `
        <style>${BASE}
        :host { display: flex; height: 35px; background: #d5d5d5; }
        section { display: flex; align-items: center; background: #f0f0f0; padding-right: 4px; border-right: 1px solid #ddd; }
        .tip { align-self: flex-end; width: 10px; margin: 0 -10px 0 0; line-height: 12px; background: #f4f4f4; border: solid #222; border-width: 0 1px 1px 0; z-index: 1; }
        </style>
        <section><tool-strip size="24" items="grip refresh | c1 c2 c3 c4 | c5 c6 c7 c8"></tool-strip></section>
        <section><span class="tip">S</span><tool-strip size="24" items="grip viewCube+ doc+ render+ molecule+ sky+ layersInfo+ layers+ sparkle+ axes+ folderFind list info target2 noSphere"></tool-strip></section>`;
    }
}
customElements.define("main-tools", MainTools);

// ---------- timeline ----------
class TimeLine extends HTMLElement {
    constructor() {
        super();
        this.attachShadow({ mode: "open" });
        let cells = "";
        for (let n = 0; n <= 450; n += 10) {
            const ticks = [10, 30, 70, 90].filter(p => !(n === 0 && p < 50) && !(n === 450 && p > 50));
            cells += `<div><svg width="100%" height="9" shape-rendering="crispEdges">${ticks.map(p => `<line x1="${p}%" x2="${p}%" y1="2" y2="9" stroke="#000"/>`).join("")}<line x1="50%" x2="50%" y1="0" y2="9" stroke="#000"/></svg><span>${n || "00"}</span></div>`;
        }
        this.shadowRoot.innerHTML = `
        <style>${BASE}
        :host { display: flex; height: 99px; background: #f0f0f0; padding: 15px 10px 0 8px; }
        .main { flex: 1; display: flex; flex-direction: column; }
        .scroll { height: 19px; border: 1px solid #b0b0b0; margin-left: 3px; display: flex; align-items: center; padding: 0 4px; }
        .track { flex: 1; height: 15px; }
        .thumb { width: 39px; height: 15px; background: #cdcdcd; margin: 0 100px 0 auto; }
        .ruler { position: relative; display: grid; grid-template-columns: repeat(46, 1fr); margin: 21px 2px 0 0; font-size: 11px; text-align: center; }
        .ruler span { display: block; line-height: 18px; white-space: nowrap; font-weight: 500; }
        .head { position: absolute; top: -12px; left: 93%; width: 5px; height: 21px; background: #f020f0; border: solid #4020c0; border-width: 0 1px; }
        .side { width: 178px; margin-left: 10px; }
        .row { display: flex; align-items: center; height: 19px; }
        input { width: 100px; height: 19px; border: 1px solid #b0b0b0; padding: 0 4px; font: inherit; margin: 0 9px 0 9px; }
        combo-box { width: 34px; height: 19px; color: #222; }
        tool-strip { --cell: 36px; margin: 12px 0 0 -4px; }
        </style>
        <div class="main">
            <div class="scroll">${icon("left", 10)}<div class="track"><div class="thumb"></div></div>${icon("right", 10)}</div>
            <div class="ruler">${cells}<i class="head"></i></div>
        </div>
        <div class="side">
            <div class="row">${icon("key", 26)}<input value="423" aria-label="当前帧"><combo-box name="步长" value="1"></combo-box></div>
            <tool-strip items="prev playBig pauseBig next gears"></tool-strip>
        </div>`;
    }
}
customElements.define("time-line", TimeLine);

// ---------- the 3D view ----------
class ViewWindow extends HTMLElement {
    constructor() {
        super();
        this.attachShadow({ mode: "open" });
        this.shadowRoot.innerHTML = `
        <style>${BASE}
        :host { display: flex; flex-direction: column; flex: 1; min-height: 0; }
        header { display: flex; align-items: center; height: 29px; background: linear-gradient(#99b4d1, #b9d1ea); padding: 6px 1px 0; }
        h2 { font-size: 12px; font-weight: 400; margin: 0 auto 0 8px; }
        header button { width: 32px; height: 18px; border: 1px solid #5c7ba5; border-radius: 2px; margin-left: 2px; background: linear-gradient(#c5d9ef 50%, #9dbbdd 50%); display: flex; align-items: center; justify-content: center; }
        header .close { background: linear-gradient(#e09a88 50%, #c34a32 50%); border-color: #6a2020; }
        .bar { height: 24px; background: #f0f0f0; display: flex; align-items: center; padding-left: 1px; }
        .bar tool-strip { --cell: 22px; --drop: 14px; }
        .scene { flex: 1; min-height: 0; width: 100%; background: #e1e1e1; }
        .lines { stroke: #a0a0a0; }
        .solid { stroke: #000; stroke-width: 1.2; stroke-linejoin: round; }
        .triad { fill: #d0d0d0; stroke: #b2b2b2; }
        </style>
        <header>${icon("viewIcon", 17)}<h2>视图 1, 3D Metric Design</h2>
            <button aria-label="最小化"><svg width="14" height="12"><path d="M2 5h10v4h-10z" fill="#fff" stroke="#555"/></svg></button>
            <button aria-label="还原"><svg width="14" height="14"><path d="M5 2h8v6h-8zM2 6h7v6h-7z" fill="#fff" stroke="#555"/><path d="M4 8h3v2h-3z" fill="#9dbbdd" stroke="#555"/></svg></button>
            <button class="close" aria-label="关闭"><svg width="14" height="12"><path d="M3 2l8 8M11 2l-8 8" stroke="#555" stroke-width="4"/><path d="M3 2l8 8M11 2l-8 8" stroke="#fff" stroke-width="2.500"/></svg></button>
        </header>
        <div class="bar"><tool-strip size="19" items="vInfo+ vBall vSun+ | brush zoomIn zoomOut zoomWin fit rotate hand | feet fly vCam vPrev vNext | vCopy vView vClip vClip2*"></tool-strip></div>
        <svg class="scene" viewBox="1 332 1918 683" preserveAspectRatio="xMidYMid slice">
            <path class="lines" fill="none" d="M246 332L1786 1015M846 332L1920 812M1440 332L1920 545M0 488L1189 1015M0 751L593 1015M1797 332L90 1015M1168 332L0 799M539 332L0 547M717 1015L1920 533M1346 1015L1920 785"/>
            <g class="solid">
                <path d="M617 587L631 594V790L617 785z" fill="#a3a3a3"/>
                <path d="M631 594L678 576V772L631 790z" fill="#989898"/>
                <path d="M617 587L664 569L678 576L631 594z" fill="#b4b4b4"/>
                <path d="M631 590L666 576V580L637 591z" fill="#9b9b9b"/>
                <path d="M637 592V788M672 578V774" fill="none"/>
            </g>
            <g class="triad">
                <path d="M22 937L51 939L44 941L58 948L46 953L28 945L25 949z"/>
                <path d="M102 938L73 939L80 941L64 948L77 953L93 945L98 950z"/>
                <circle cx="61" cy="954" r="9" fill="none"/><path d="M61 928V954" stroke-width="2"/>
                <circle cx="61" cy="928" r="2"/><circle cx="61" cy="954" r="2"/>
            </g>
        </svg>`;
    }
}
customElements.define("view-window", ViewWindow);

// ---------- floating windows ----------
class FloatWindow extends HTMLElement {
    constructor() {
        super();
        this.attachShadow({ mode: "open" });
    }
    connectedCallback() {
        const active = this.hasAttribute("active");
        this.shadowRoot.innerHTML = `
        <style>${BASE}
        :host { display: block; position: absolute; background: #f0f0f0; font-size: 13px; border: 1px solid ${active ? "#1a6fc0" : "#8c8c8c"}; box-shadow: 0 2px 9px rgba(0, 0, 0, .3); }
        header { height: 30px; background: #fff; display: flex; align-items: center; padding: 0 0 2px 8px; color: ${active ? "#000" : "#999"}; }
        h2 { font-size: 13px; font-weight: 400; margin: 0 auto 0 5px; white-space: nowrap; }
        header button { width: 45px; height: 28px; display: flex; align-items: center; justify-content: center; }
        header button:last-child { margin-right: ${active ? -7 : 1}px; }
        path { fill: none; stroke: currentColor; }
        .off { opacity: .35; }
        </style>
        <header><ms-icon name="${this.getAttribute("icon")}" size="16"></ms-icon><h2>${this.getAttribute("heading")}</h2>
            ${active ? "" : `<button aria-label="最小化"><svg width="10" height="10"><path d="M0 5.500h10"/></svg></button>
            <button class="off" aria-label="最大化"><svg width="10" height="10"><path d="M.5.5h9v9h-9z"/></svg></button>`}
            <button aria-label="关闭"><svg width="11" height="11"><path d="M.5.5l10 10M10.500.5l-10 10"/></svg></button>
        </header>
        <slot></slot>`;
    }
}
customElements.define("float-window", FloatWindow);

class PushButton extends HTMLElement {
    constructor() {
        super();
        this.attachShadow({ mode: "open" });
    }
    connectedCallback() {
        const key = this.getAttribute("key");
        this.shadowRoot.innerHTML = `
        <style>${BASE}
        :host { display: block; width: 88px; }
        button { width: 100%; height: 24px; background: #e1e1e1; border: 1px solid #adadad; white-space: nowrap; line-height: 20px; padding-bottom: 2px; }
        :host([default]) button { border: 2px solid #0078d7; }
        </style>
        <button>${this.getAttribute("text")}${key ? `(<u>${key}</u>)` : ""}</button>`;
    }
}
customElements.define("push-button", PushButton);

class KeyframeForm extends HTMLElement {
    constructor() {
        super();
        this.attachShadow({ mode: "open" });
        this.shadowRoot.innerHTML = `
        <style>${BASE}
        :host { display: block; padding: 11px 12px 12px 9px; }
        .grid { display: grid; grid-template-columns: 75px 127px auto; column-gap: 5px; row-gap: 4px; align-items: center; justify-content: start; }
        label, .name { text-align: right; height: 19px; line-height: 18px; padding-right: 1px; white-space: nowrap; }
        .focus { outline: 1px dotted #000; }
        output { padding-left: 5px; font-size: 12px; }
        input { width: 127px; height: 19px; border: 1px solid #adadad; padding: 0 4px; font: inherit; font-size: 12px; outline: 0; }
        input::selection { background: #0078d7; color: #fff; }
        .pair { display: grid; align-items: center; }
        select { grid-area: 1 / 1; width: 126px; height: 19px; margin-left: 1px; font: inherit; appearance: none; background: #e1e1e1; border: 1px solid #adadad; border-radius: 0; padding: 0 4px; line-height: 16px; }
        .pair .arrow { grid-area: 1 / 1; justify-self: end; margin-right: 6px; border-width: 5px 4px 0; pointer-events: none; }
        .extra { display: flex; align-items: center; gap: 7px; margin-left: 6px; color: #777; }
        .buttons { display: flex; justify-content: flex-end; gap: 13px; margin-top: 14px; }
        </style>
        <div class="grid">
            <span class="name">关键帧(<u>K</u>):</span><output>G2</output><span></span>
            <label class="focus" for="start">起始时间(<u>T</u>):</label><input id="start" value="00">
            <button class="extra" aria-label="选择时间">${icon("calc", 15)}<i class="arrow"></i></button>
            <label for="ease">内插(<u>I</u>):</label><span class="pair"><select id="ease"><option>线性(L)</option></select><i class="arrow"></i></span><span></span>
            <label for="rate">速率(<u>V</u>):</label><span class="pair"><select id="rate"><option>快速(C)</option></select><i class="arrow"></i></span><span></span>
        </div>
        <div class="buttons"><push-button default text="确定" key="O"></push-button><push-button text="取消"></push-button></div>`;
    }
    connectedCallback() {
        const start = this.shadowRoot.querySelector("#start");
        start.focus();
        start.select();
    }
}
customElements.define("keyframe-form", KeyframeForm);

class SelectTools extends HTMLElement {
    constructor() {
        super();
        this.attachShadow({ mode: "open" });
        this.shadowRoot.innerHTML = `
        <style>${BASE}
        :host { display: flex; padding: 11px 11px 8px; }
        .col { display: flex; flex-direction: column; gap: 15px; }
        .frame { border: 1px solid #a0a0a0; border-right-color: #fff; border-bottom-color: #fff; padding: 2px; height: 26px; --cell: 21px; }
        .side { margin-left: 18px; gap: 13px; --cell: 28px; }
        .more { align-self: flex-start; margin: 60px 1px 0 auto; }
        .more .arrow { display: block; border-width: 5px 5px 0; }
        </style>
        <div class="col">
            <div class="frame"><tool-strip size="17" items="pick* block shape circle line"></tool-strip></div>
            <div class="frame"><tool-strip size="17" items="select* plus minus invert all"></tool-strip></div>
        </div>
        <div class="col side"><tool-strip items="clear"></tool-strip><tool-strip items="grey"></tool-strip></div>
        <button class="more" aria-label="更多"><i class="arrow"></i></button>`;
    }
}
customElements.define("select-tools", SelectTools);

class KeyframeList extends HTMLElement {
    constructor() {
        super();
        this.attachShadow({ mode: "open" });
        this.shadowRoot.innerHTML = `
        <style>${BASE}
        :host { display: block; padding: 11px 11px 12px; }
        .box { height: 112px; background: #fff; border: 1px solid #828790; padding: 0 2px; }
        table { width: 100%; border-collapse: separate; border-spacing: 0; table-layout: fixed; line-height: 15px; }
        th { font-weight: 400; text-align: left; height: 20px; padding: 0 4px; border-right: 1px solid #e5e5e5; }
        th:first-child { width: 112px; }
        td { padding: 0; height: 17px; font-size: 12px; border: 1px solid transparent; border-left: 0; }
        tbody::before { content: ""; display: block; height: 4px; }
        .on td { background: linear-gradient(#f0f4fc, #d4eafc); border-color: #99d1f5; border-right: 0; }
        .on td:last-child { border-right: 1px solid #99d1f5; }
        .buttons { display: flex; justify-content: space-between; padding: 13px 1px 0; }
        </style>
        <div class="box"><table>
            <thead><tr><th>名称</th><th>描述</th></tr></thead>
            <tbody><tr><td>G1</td><td></td></tr><tr class="on"><td>G2</td><td></td></tr><tr><td>G3</td><td></td></tr></tbody>
        </table></div>
        <div class="buttons"><push-button text="创建" key="C"></push-button><push-button text="删除" key="D"></push-button><push-button text="冻结" key="Z"></push-button><push-button text="脚本" key="S"></push-button></div>`;
    }
}
customElements.define("keyframe-list", KeyframeList);

// ---------- bottom bars ----------
class ViewToggles extends HTMLElement {
    constructor() {
        super();
        this.attachShadow({ mode: "open" });
        this.shadowRoot.innerHTML = `
        <style>${BASE}
        :host { display: flex; border: 1px solid #aaa; }
        button { width: 16px; height: 18px; line-height: 16px; border-right: 1px solid #333; border-top: 1px solid #fff; }
        button:last-child { border-right: 0; width: 14px; }
        .on { background: #78aee8; border: 1px solid #2a62b8; }
        </style>
        ${[1, 2, 3, 4, 5, 6, 7, 8].map(n => `<button class="${n < 4 ? "on" : ""}">${n}</button>`).join("")}`;
    }
}
customElements.define("view-toggles", ViewToggles);

class BottomBar extends HTMLElement {
    constructor() {
        super();
        this.attachShadow({ mode: "open" });
        this.shadowRoot.innerHTML = `
        <style>${BASE}
        :host { display: flex; height: 33px; background: #d5d5d5; }
        section { display: flex; align-items: center; background: #f2f2f2; border-radius: 0 3px 3px 0; margin-right: 2px; }
        combo-box { width: 148px; height: 20px; margin-left: 1px; --combo-pad: 24px; }
        combo-box ms-icon { margin-left: 2px; }
        .nav { padding-right: 4px; }
        .coord { display: flex; align-items: center; height: 100%; padding: 0 5px 0 7px; border-right: 1px solid #aaa; }
        .coord:last-child { border: 0; padding-right: 2px; }
        .coord label { font-size: 14px; font-weight: 700; width: 16px; }
        .coord input { width: 106px; height: 20px; border: 1px solid #adadad; padding: 0 4px; font: inherit; font-size: 11px; color: #777; background: #fff; }
        </style>
        <section class="nav"><tool-strip size="26" items="grip back+ forward+ disc+"></tool-strip>
            <combo-box name="模型" value="3D Metric Design Model"><ms-icon name="models" size="18"></ms-icon></combo-box>
            <tool-strip items="| windows |"></tool-strip><view-toggles></view-toggles></section>
        <section><tool-strip items="grip cross* | s1 s2* s3 s4 s5 s6 s7 s8 s9 s10 s11 s12 s13 | f1 f2 f3"></tool-strip></section>
        <section><tool-strip items="grip"></tool-strip>
            ${[["X", "70379.250"], ["Y", "13431.739"], ["Z", "7314.916"]].map(([n, v]) => `<span class="coord"><label for="${n}">${n}</label><input id="${n}" value="${v}"></span>`).join("")}</section>`;
    }
}
customElements.define("bottom-bar", BottomBar);

class StatusBar extends HTMLElement {
    constructor() {
        super();
        this.attachShadow({ mode: "open" });
        this.shadowRoot.innerHTML = `
        <style>${BASE}
        :host { display: flex; align-items: center; height: 30px; background: #f0f0f0; font-size: 13px; }
        .prompt { width: 475px; padding: 0 0 2px 3px; }
        .mid { flex: 1; display: flex; align-items: center; }
        .edge { width: 1px; height: 26px; background: #aaa; }
        .flag { margin-left: 22px; }
        .cells { display: flex; }
        .cells span { width: 30px; height: 23px; border-left: 1px solid #888; display: flex; align-items: center; justify-content: center; }
        .cells .name { width: 133px; justify-content: flex-start; padding-left: 4px; font-size: 12px; }
        .cells .wide { width: 118px; }
        .cells .last { width: 33px; }
        </style>
        <div class="prompt">选择元素 &gt; 标识要添加到集中的元素</div>
        <div class="mid"><tool-strip items="grip"></tool-strip><i class="edge"></i><svg class="flag" width="8" height="24"><path d="M0 4l3-3l3 3z"/><path d="M6.500 1v22" stroke="#555"/></svg></div>
        <div class="cells"><span>${icon("snap", 17)}</span><span>${icon("lock", 15)}</span><span class="name">Default</span><span class="wide"></span>
            <span></span><span></span><span></span><span>${icon("scroll", 18)}</span><span></span><span></span><span>${icon("book", 18)}</span><span></span><span class="last">${icon("cup", 16)}</span></div>`;
    }
}
customElements.define("status-bar", StatusBar);

class MsApp extends HTMLElement {
    constructor() {
        super();
        this.attachShadow({ mode: "open" });
        this.shadowRoot.innerHTML = `
        <style>
        :host { box-sizing: border-box; display: flex; flex-direction: column; height: 100vh; border: 1px solid #1c6cb4; border-top: 0; border-bottom: 2px solid #111; position: relative; overflow: hidden; }
        .edit { left: 462px; top: 199px; width: 273px; }
        .pick { left: 1144px; top: 296px; width: 232px; }
        .frames { left: 1120px; top: 425px; width: 417px; }
        .cursor { position: absolute; left: 1462px; top: 600px; }
        </style>
        <title-bar></title-bar>
        <ribbon-tabs></ribbon-tabs>
        <ribbon-bar></ribbon-bar>
        <main-tools></main-tools>
        <time-line></time-line>
        <view-window></view-window>
        <bottom-bar></bottom-bar>
        <status-bar></status-bar>
        <float-window class="pick" icon="tools" heading="选择元素"><select-tools></select-tools></float-window>
        <float-window class="frames" icon="logo" heading="动画关键帧"><keyframe-list></keyframe-list></float-window>
        <float-window class="edit" active icon="logo" heading="编排关键帧"><keyframe-form></keyframe-form></float-window>
        <ms-icon class="cursor" name="cursor" size="20"></ms-icon>`;
    }
}
customElements.define("ms-app", MsApp);
</script>
</body>
</html>
